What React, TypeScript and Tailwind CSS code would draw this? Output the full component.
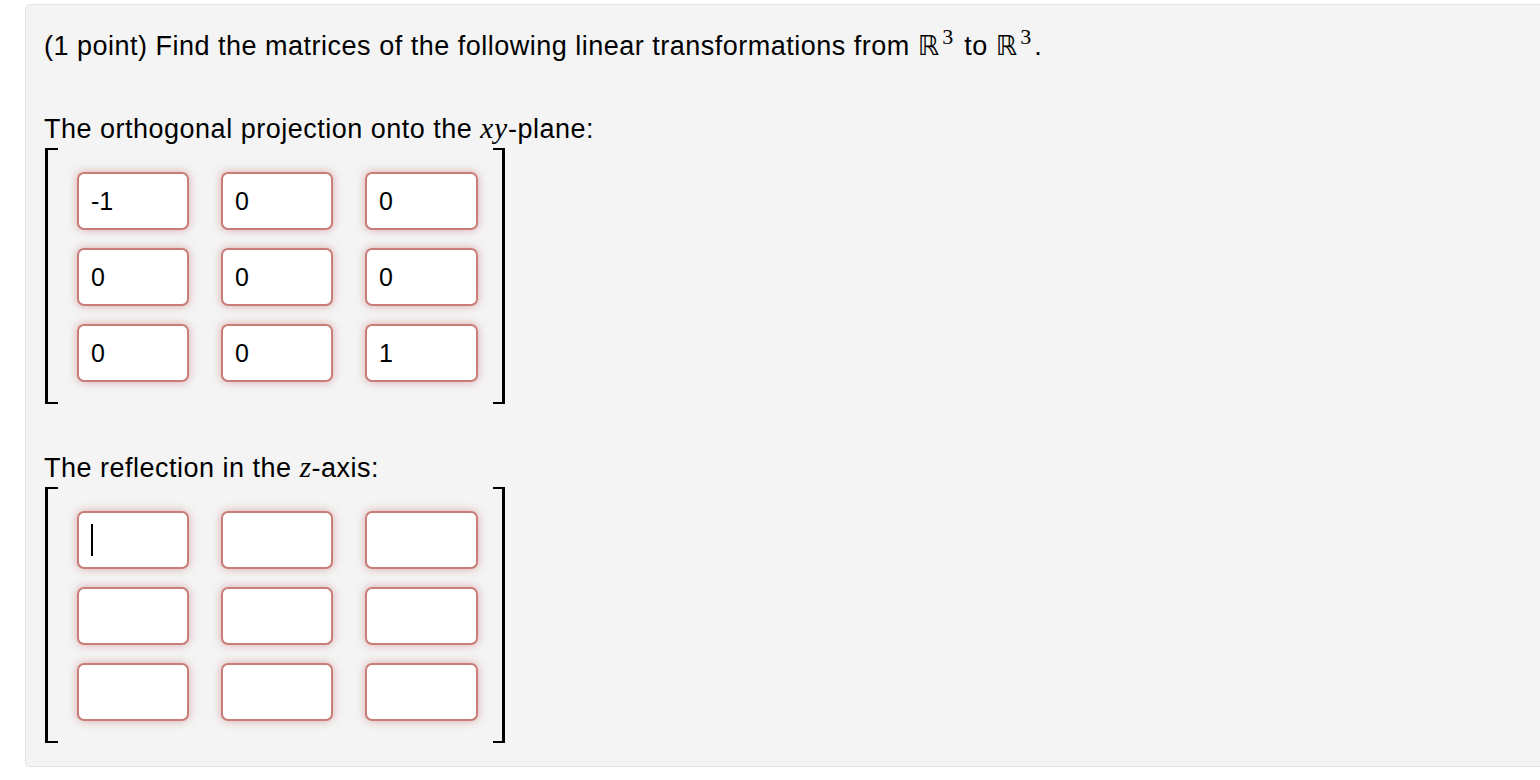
import React from "react";

const cellBase =
  "h-[58px] rounded-[7px] border-2 border-[#c97d79] bg-white shadow-[0_0_9px_rgba(195,95,95,0.5)] pl-[12px] flex items-center text-[25px] leading-none text-black";

function Cell({ value, caret }: { value?: string; caret?: boolean }) {
  return (
    <div className={cellBase}>
      {caret ? <span className="block w-[1.5px] h-[32px] bg-black" /> : <span>{value}</span>}
    </div>
  );
}

function Matrix({ values, caretFirst }: { values: string[]; caretFirst?: boolean }) {
  return (
    <div className="flex items-stretch ml-[1px]">
      <div className="w-[13px] border-l-[3px] border-t-2 border-b-2 border-black" />
      <div className="ml-[19px] pt-[24px] pb-[22px] grid grid-cols-[112px_112px_113px] gap-x-[32px] gap-y-[18px]">
        {values.map((v, i) => (
          <Cell key={i} value={v} caret={caretFirst && i === 0} />
        ))}
      </div>
      <div className="ml-[15px] w-[12px] border-r-[3px] border-t-2 border-b-2 border-black" />
    </div>
  );
}

const serif = "font-['Liberation_Serif','DejaVu_Serif',serif]";

function RR() {
  return (
    <>
      <span className="font-['DejaVu_Sans',sans-serif] text-[27px] tracking-normal">ℝ</span>
      <span className={`${serif} text-[22px] relative top-[-11px] ml-[3px] mr-[3px] tracking-normal`}>3</span>
    </>
  );
}

const txt = "text-[27px] leading-[30px] tracking-[0.5px] h-[30px]";

export default function App() {
  return (
    <div className="min-h-[780px] bg-white pt-[4px] pl-[25px] font-['Liberation_Sans',Arial,sans-serif] text-black">
      <div className="bg-[#f4f4f4] border border-[#e3e3e3] border-r-0 rounded-l-[5px] pl-[18px] pt-[26px] pb-[23px]">
        <p className={txt}>
          (1 point) Find the matrices of the following linear transformations from <RR /> to <RR />.
        </p>
        <p className={`mt-[52px] mb-[5px] ${txt}`}>
          The orthogonal projection onto the{" "}
          <span className={`${serif} italic text-[29px] tracking-[1px]`}>xy</span>-plane:
        </p>
        <Matrix values={["-1", "0", "0", "0", "0", "0", "0", "0", "1"]} />
        <p className={`mt-[48px] mb-[5px] ${txt}`}>
          The reflection in the <span className={`${serif} italic text-[29px]`}>z</span>-axis:
        </p>
        <Matrix values={["", "", "", "", "", "", "", "", ""]} caretFirst />
      </div>
    </div>
  );
}
